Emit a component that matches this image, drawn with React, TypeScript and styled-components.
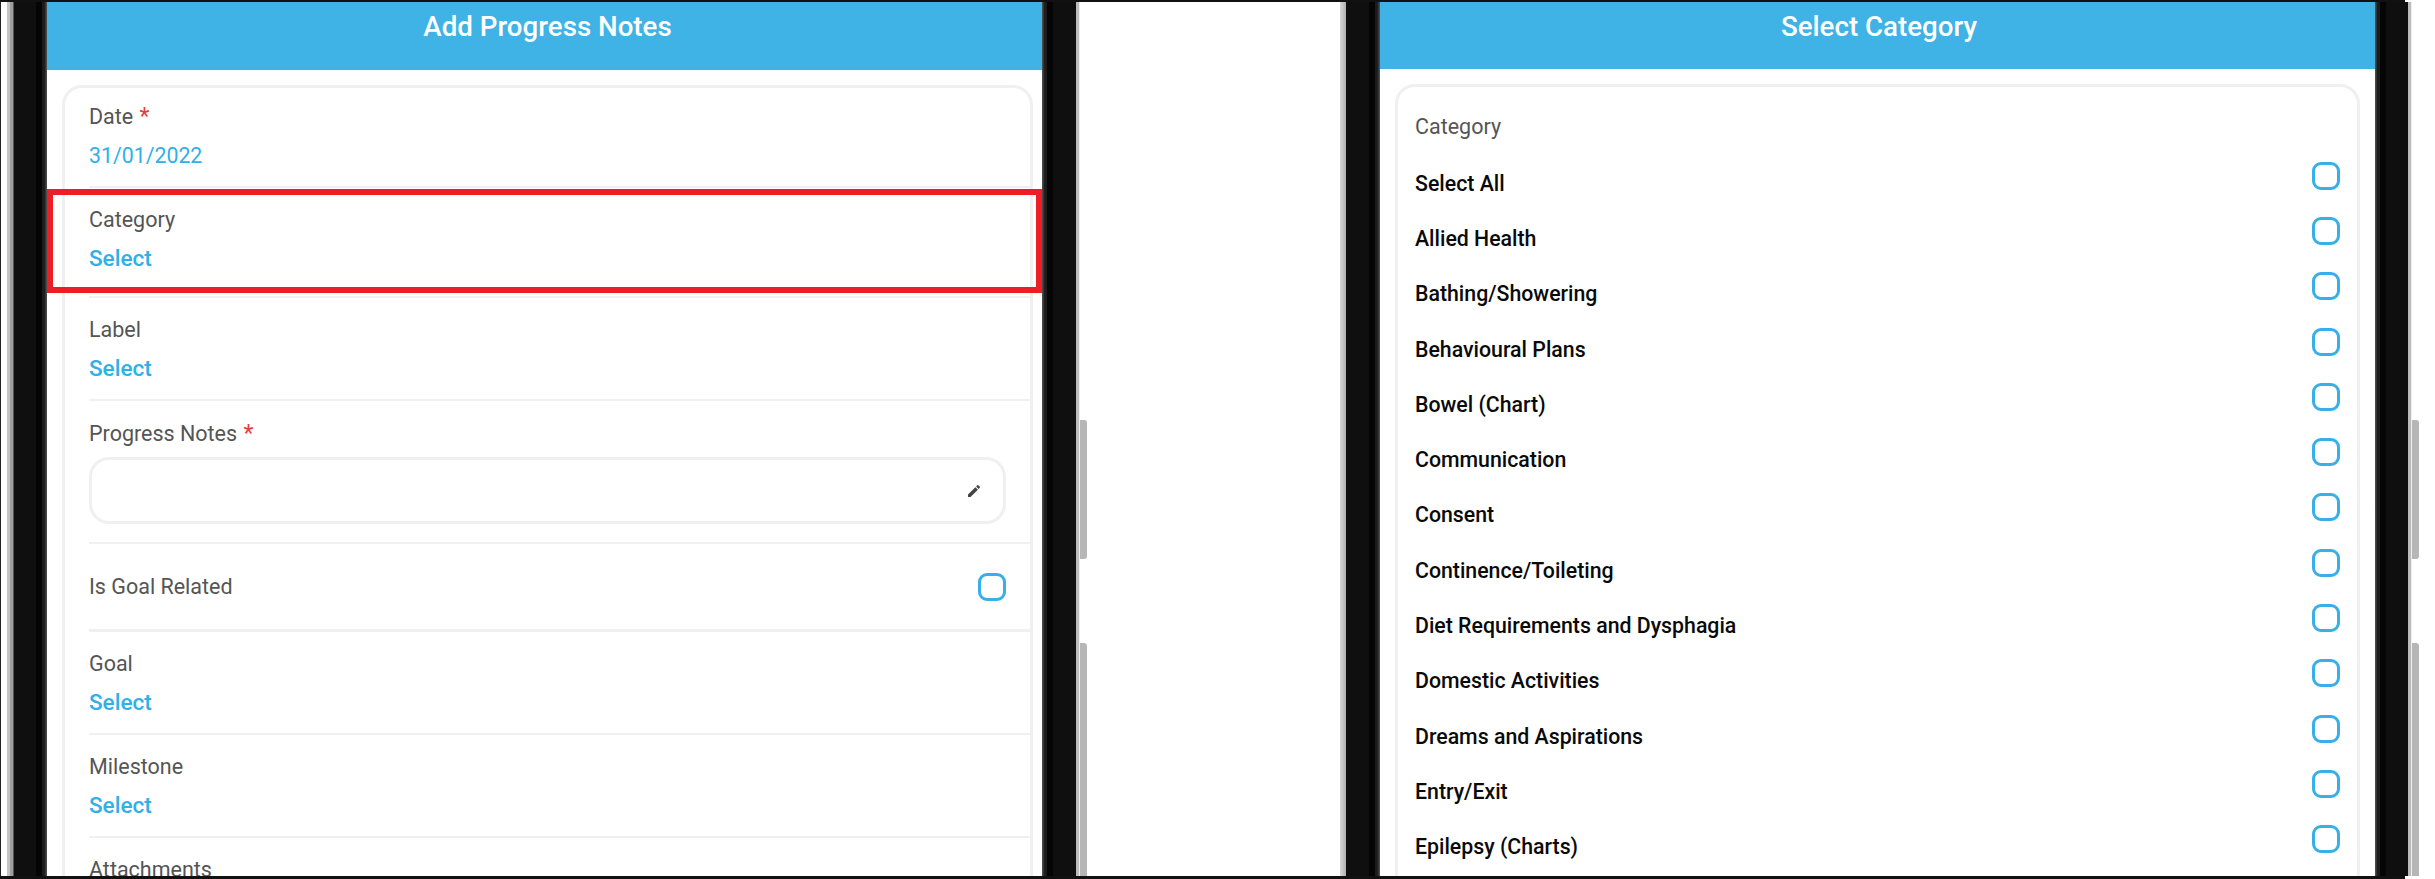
import React from 'react';
import styled, { createGlobalStyle } from 'styled-components';
import { MdEdit } from 'react-icons/md';

const GlobalStyle = createGlobalStyle`
  html, body {
    margin: 0;
    padding: 0;
    background: #fff;
    overflow: hidden;
  }
  * {
    box-sizing: border-box;
  }
`;

const Stage = styled.div`
  position: relative;
  width: 2435px;
  height: 879px;
  display: flex;
  overflow: hidden;
  background: #fff;
  border-style: solid;
  border-width: 2px 0 3px;
  border-image: linear-gradient(to right, #111 0 2405px, transparent 2405px) 3 0;
  font-family: Roboto, 'Liberation Sans', sans-serif;
`;

const LeftRail = styled.div`
  width: 14px;
  flex: none;
  background: linear-gradient(
    to right,
    #222 0 1px,
    #fff 1px 7px,
    #c4c4c4 7px 10px,
    #9e9e9e 10px 13px,
    #555 13px 14px
  );
`;

const SideGlass = styled.div<{ $gap: number }>`
  width: 6px;
  flex: none;
  margin-left: ${(p) => p.$gap}px;
  background: linear-gradient(to right, #d8d8d8, #b0b0b0);
`;

const Bezel = styled.div<{ $width: number; $flip?: boolean }>`
  width: ${(p) => p.$width}px;
  flex: none;
  background: linear-gradient(
    ${(p) => (p.$flip ? 'to left' : 'to right')},
    #0f0f0f 0 68%,
    #050505 68% 84%,
    #1c1c1c 84% 92%,
    #555 100%
  );
`;

const ButtonRail = styled.div`
  width: 11px;
  flex: none;
  display: flex;
  flex-direction: column;
  align-items: flex-end;
  background: linear-gradient(to right, #bcbcbc 0 3px, #efefef 3px 4px, #fff 4px);
`;

const SideButton = styled.div<{ $top: number; $height: number }>`
  flex: none;
  width: 7px;
  height: ${(p) => p.$height}px;
  margin-top: ${(p) => p.$top}px;
  background: #b6b6b6;
  border-radius: 0 3px 3px 0;
`;

const Screen = styled.section<{ $headerHeight: number }>`
  position: relative;
  width: 995px;
  flex: none;
  display: flex;
  flex-direction: column;
  background: #fff;
  overflow: hidden;
  --header-height: ${(p) => p.$headerHeight}px;
`;

const Header = styled.header<{ $shift: number }>`
  flex: none;
  height: var(--header-height);
  display: flex;
  justify-content: center;
  padding: 6px 0 0 ${(p) => p.$shift}px;
  background: #3fb2e6;
  color: #fff;
  font-size: 27.7px;
  line-height: 38px;
  font-weight: 500;
`;

const Card = styled.div<{ $inset: number; $padding: string }>`
  flex: none;
  margin: 15px ${(p) => p.$inset}px 0 15px;
  padding: ${(p) => p.$padding};
  border: 3px solid #f0f0f0;
  border-radius: 20px;
  background: #fff;
`;

const Field = styled.div<{ $top?: number; $bottom?: number }>`
  display: flex;
  flex-direction: column;
  gap: 8px;
  padding: ${(p) => p.$top ?? 17}px 0 ${(p) => p.$bottom ?? 16}px;
  border-bottom: 2px solid #f0f0f0;
`;

const FieldRow = styled(Field)`
  flex-direction: row;
  align-items: center;
  justify-content: space-between;
  height: 88px;
  padding: 0 24px 0 0;
  border-bottom-width: 3px;
`;

const FieldLabel = styled.div`
  font-size: 21.5px;
  line-height: 30px;
  color: #555;
`;

const Required = styled.span`
  margin-left: 1px;
  font-size: 23px;
  line-height: 20px;
  color: #ec3b3b;
`;

const FieldValue = styled.div`
  font-size: 22.5px;
  line-height: 30px;
  font-weight: 500;
  color: #2fb0e8;
`;

const DateValue = styled(FieldValue)`
  margin-top: 1px;
  font-size: 21.3px;
  font-weight: 400;
`;

const NotesBox = styled.div`
  height: 67px;
  margin: 0 24px 2px 0;
  padding-right: 21px;
  display: flex;
  align-items: center;
  justify-content: flex-end;
  border: 3px solid #f0f0f0;
  border-radius: 20px;
  color: #444;
  font-size: 16px;
`;

const Checkbox = styled.span`
  flex: none;
  width: 28px;
  height: 28px;
  border: 3px solid #38afe8;
  border-radius: 9px;
`;

const CategoryHeading = styled(FieldLabel)`
  margin-bottom: 14px;
`;

const CategoryRow = styled.div`
  height: 55.3px;
  display: flex;
  align-items: center;
  justify-content: space-between;
`;

const CategoryName = styled.span`
  font-size: 21.3px;
  line-height: 30px;
  font-weight: 500;
  color: #0a0a0a;
`;

const CategoryCheckbox = styled(Checkbox)`
  margin-top: -16px;
`;

const Highlight = styled.div`
  position: absolute;
  top: 187px;
  left: 0;
  right: 0;
  height: 104px;
  border: 6px solid #ee1c25;
  pointer-events: none;
`;

const categories = [
  'Select All',
  'Allied Health',
  'Bathing/Showering',
  'Behavioural Plans',
  'Bowel (Chart)',
  'Communication',
  'Consent',
  'Continence/Toileting',
  'Diet Requirements and Dysphagia',
  'Domestic Activities',
  'Dreams and Aspirations',
  'Entry/Exit',
  'Epilepsy (Charts)',
];

const App = () => {
  return (
    <Stage>
      <GlobalStyle />
      <LeftRail />
      <Bezel $width={33} />

      <Screen $headerHeight={68}>
        <Header $shift={6}>Add Progress Notes</Header>
        <Card $inset={9} $padding="0 0 40px 24px">
          <Field $top={14} $bottom={15}>
            <FieldLabel>
              Date <Required>*</Required>
            </FieldLabel>
            <DateValue>31/01/2022</DateValue>
          </Field>
          <Field $bottom={23}>
            <FieldLabel>Category</FieldLabel>
            <FieldValue>Select</FieldValue>
          </Field>
          <Field>
            <FieldLabel>Label</FieldLabel>
            <FieldValue>Select</FieldValue>
          </Field>
          <Field $top={18}>
            <FieldLabel>
              Progress Notes <Required>*</Required>
            </FieldLabel>
            <NotesBox>
              <MdEdit />
            </NotesBox>
          </Field>
          <FieldRow>
            <FieldLabel>Is Goal Related</FieldLabel>
            <Checkbox />
          </FieldRow>
          <Field>
            <FieldLabel>Goal</FieldLabel>
            <FieldValue>Select</FieldValue>
          </Field>
          <Field>
            <FieldLabel>Milestone</FieldLabel>
            <FieldValue>Select</FieldValue>
          </Field>
          <Field>
            <FieldLabel>Attachments</FieldLabel>
          </Field>
        </Card>
        <Highlight />
      </Screen>

      <Bezel $width={34} $flip />
      <ButtonRail>
        <SideButton $top={418} $height={139} />
        <SideButton $top={84} $height={300} />
      </ButtonRail>
      <SideGlass $gap={253} />
      <Bezel $width={34} />

      <Screen $headerHeight={67}>
        <Header $shift={3}>Select Category</Header>
        <Card $inset={15} $padding="25px 17px 60px 17px">
          <CategoryHeading>Category</CategoryHeading>
          {categories.map((name) => (
            <CategoryRow key={name}>
              <CategoryName>{name}</CategoryName>
              <CategoryCheckbox />
            </CategoryRow>
          ))}
        </Card>
      </Screen>

      <Bezel $width={33} $flip />
      <ButtonRail>
        <SideButton $top={418} $height={139} />
        <SideButton $top={84} $height={300} />
      </ButtonRail>
    </Stage>
  );
};

export default App;
